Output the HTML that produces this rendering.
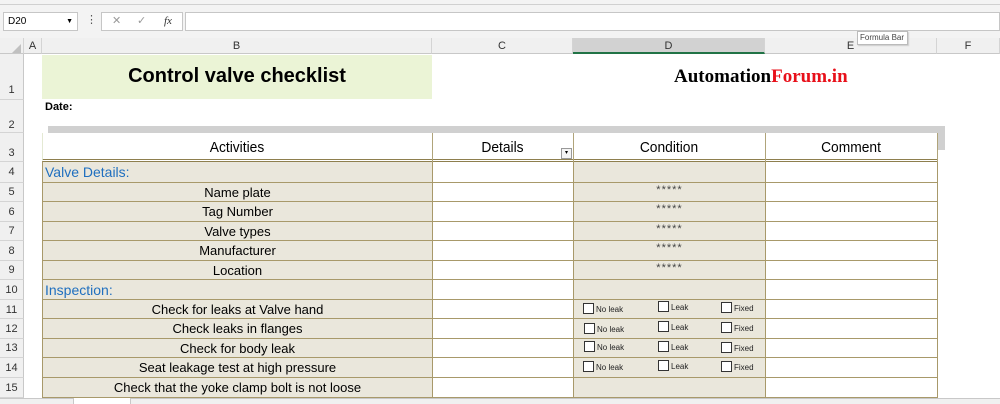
<!DOCTYPE html>
<html><head><meta charset="utf-8"><style>
*{margin:0;padding:0;box-sizing:border-box}
body{width:1000px;height:404px;overflow:hidden;background:#fff;font-family:"Liberation Sans",Arial,sans-serif;position:relative}
.a{position:absolute}
.rn{position:absolute;left:0;width:24px;background:#f0f0f0;border-bottom:1px solid #d4d4d4;border-right:1px solid #c8c8c8;font-size:11px;color:#333;text-align:center}
.ch{position:absolute;top:38px;height:16px;background:#f0f0f0;border-right:1px solid #d4d4d4;border-bottom:1px solid #c8c8c8;font-size:11px;color:#333;text-align:center;line-height:16px}
.cell{position:absolute;border-bottom:1px solid #a8996a;border-right:1px solid #a8996a;font-size:13px;color:#000;text-align:center;overflow:hidden;white-space:nowrap}
.bg{background:#eae7dc}
.st{font-size:11px;line-height:15px;color:#444;letter-spacing:1px}
.cb{position:absolute;font-size:8px;color:#222}
.cb i{display:inline-block;width:11px;height:11px;border:1px solid #333;vertical-align:-2px;margin-right:2px;background:#fff}
.hd{position:absolute;top:139px;text-align:center;font-size:15px;font-weight:bold;transform:scaleX(0.92)}
</style></head><body>
<div class="a" style="left:0;top:0;width:1000px;height:5px;background:#f3f3f3;border-bottom:1px solid #d0d0d0"></div>
<div class="a" style="left:0;top:5px;width:1000px;height:33px;background:#f3f3f3"></div>
<div class="a" style="left:3px;top:12px;width:75px;height:19px;background:#fff;border:1px solid #c6c6c6;font-size:10px;line-height:17px;padding-left:4px">D20<span style="position:absolute;right:4px;top:0;font-size:7px">▼</span></div>
<div class="a" style="left:86px;top:13px;font-size:11px;color:#555">⋮</div>
<div class="a" style="left:101px;top:12px;width:82px;height:19px;background:#fff;border:1px solid #c6c6c6;font-size:11px;color:#999;line-height:17px"><span style="position:absolute;left:10px">✕</span><span style="position:absolute;left:35px">✓</span><span style="position:absolute;left:62px;color:#333;font-style:italic;font-family:'Liberation Serif',serif">fx</span></div>
<div class="a" style="left:185px;top:12px;width:815px;height:19px;background:#fff;border:1px solid #c6c6c6"></div>
<div class="ch" style="left:0;width:24px"></div>
<div class="a" style="left:12px;top:44px;width:0;height:0;border-left:9px solid transparent;border-bottom:9px solid #c0c0c0"></div>
<div class="ch" style="left:24px;width:18px">A</div>
<div class="ch" style="left:42px;width:390px">B</div>
<div class="ch" style="left:432px;width:141px">C</div>
<div class="ch" style="left:573px;width:192px;background:#d2d2d2;border-bottom:2px solid #217346">D</div>
<div class="ch" style="left:765px;width:172px">E</div>
<div class="ch" style="left:937px;width:63px">F</div>
<div class="a" style="left:857px;top:31px;width:51px;height:14px;background:#fff;border:1px solid #bbb;font-size:8px;line-height:12px;padding-left:2px;color:#444;box-shadow:1px 1px 1px #ccc">Formula Bar</div>
<div class="rn" style="top:54px;height:46px;line-height:72px">1</div>
<div class="rn" style="top:100px;height:33px;line-height:50px">2</div>
<div class="rn" style="top:133px;height:29px;line-height:40px">3</div>
<div class="rn" style="top:162px;height:21px;line-height:21px">4</div>
<div class="rn" style="top:183px;height:19px;line-height:19px">5</div>
<div class="rn" style="top:202px;height:20px;line-height:20px">6</div>
<div class="rn" style="top:222px;height:19px;line-height:19px">7</div>
<div class="rn" style="top:241px;height:20px;line-height:20px">8</div>
<div class="rn" style="top:261px;height:19px;line-height:19px">9</div>
<div class="rn" style="top:280px;height:20px;line-height:20px">10</div>
<div class="rn" style="top:300px;height:19px;line-height:20px">11</div>
<div class="rn" style="top:319px;height:20px;line-height:20px">12</div>
<div class="rn" style="top:339px;height:19px;line-height:19px">13</div>
<div class="rn" style="top:358px;height:20px;line-height:20px">14</div>
<div class="rn" style="top:378px;height:20px;line-height:20px">15</div>
<div class="a" style="left:42px;top:55px;width:390px;height:44px;background:#ebf4d6;font-size:20px;font-weight:bold;text-align:center;line-height:42px">Control valve checklist</div>
<div class="a" style="left:674px;top:66px;font-family:'Liberation Serif',serif;font-weight:bold;font-size:19px">Automation<span style="color:#e8101a">Forum.in</span></div>
<div class="a" style="left:45px;top:101px;font-size:11px;font-weight:bold">Date:</div>
<div class="a" style="left:48px;top:126px;width:897px;height:7px;background:#d0d0d0"></div>
<div class="a" style="left:937px;top:126px;width:8px;height:24px;background:#d0d0d0"></div>
<div class="a" style="left:42px;top:133px;width:896px;height:29px;background:#fff;border-left:1px solid #e4e9d3;border-bottom:3px double #8e7f4e"></div>
<div class="a" style="left:432px;top:133px;width:1px;height:29px;background:#b0a47a"></div>
<div class="a" style="left:573px;top:133px;width:1px;height:29px;background:#b0a47a"></div>
<div class="a" style="left:765px;top:133px;width:1px;height:29px;background:#b0a47a"></div>
<div class="a" style="left:937px;top:133px;width:1px;height:29px;background:#b0a47a"></div>
<div class="hd" style="left:42px;width:390px;font-weight:normal">Activities</div>
<div class="hd" style="left:432px;width:141px;font-weight:normal">Details</div>
<div class="hd" style="left:573px;width:192px;font-weight:normal">Condition</div>
<div class="hd" style="left:765px;width:172px;font-weight:normal">Comment</div>
<div class="a" style="left:561px;top:148px;width:11px;height:11px;border:1px solid #999;background:#f4f4f4;font-size:6px;text-align:center;line-height:9px">▾</div>
<div class="a" style="left:42px;top:162px;width:1px;height:236px;background:#a8996a"></div>

<div class="cell bg" style="left:43px;top:162px;width:390px;height:21px;text-align:left;padding-left:2px;color:#1f6fbf;font-size:14px;line-height:20px">Valve Details:</div>
<div class="cell" style="left:433px;top:162px;width:141px;height:21px"></div>
<div class="cell bg" style="left:574px;top:162px;width:192px;height:21px"></div>
<div class="cell" style="left:766px;top:162px;width:172px;height:21px"></div>

<div class="cell bg" style="left:43px;top:183px;width:390px;height:19px;line-height:19px">Name plate</div>
<div class="cell" style="left:433px;top:183px;width:141px;height:19px"></div>
<div class="cell bg st" style="left:574px;top:183px;width:192px;height:19px">*****</div>
<div class="cell" style="left:766px;top:183px;width:172px;height:19px"></div>

<div class="cell bg" style="left:43px;top:202px;width:390px;height:20px;line-height:20px">Tag Number</div>
<div class="cell" style="left:433px;top:202px;width:141px;height:20px"></div>
<div class="cell bg st" style="left:574px;top:202px;width:192px;height:20px">*****</div>
<div class="cell" style="left:766px;top:202px;width:172px;height:20px"></div>

<div class="cell bg" style="left:43px;top:222px;width:390px;height:19px;line-height:19px">Valve types</div>
<div class="cell" style="left:433px;top:222px;width:141px;height:19px"></div>
<div class="cell bg st" style="left:574px;top:222px;width:192px;height:19px">*****</div>
<div class="cell" style="left:766px;top:222px;width:172px;height:19px"></div>

<div class="cell bg" style="left:43px;top:241px;width:390px;height:20px;line-height:20px">Manufacturer</div>
<div class="cell" style="left:433px;top:241px;width:141px;height:20px"></div>
<div class="cell bg st" style="left:574px;top:241px;width:192px;height:20px">*****</div>
<div class="cell" style="left:766px;top:241px;width:172px;height:20px"></div>

<div class="cell bg" style="left:43px;top:261px;width:390px;height:19px;line-height:19px">Location</div>
<div class="cell" style="left:433px;top:261px;width:141px;height:19px"></div>
<div class="cell bg st" style="left:574px;top:261px;width:192px;height:19px">*****</div>
<div class="cell" style="left:766px;top:261px;width:172px;height:19px"></div>

<div class="cell bg" style="left:43px;top:280px;width:390px;height:20px;text-align:left;padding-left:2px;color:#1f6fbf;font-size:14px;line-height:20px">Inspection:</div>
<div class="cell" style="left:433px;top:280px;width:141px;height:20px"></div>
<div class="cell bg" style="left:574px;top:280px;width:192px;height:20px"></div>
<div class="cell" style="left:766px;top:280px;width:172px;height:20px"></div>

<div class="cell bg" style="left:43px;top:300px;width:390px;height:19px;line-height:19px">Check for leaks at Valve hand</div>
<div class="cell" style="left:433px;top:300px;width:141px;height:19px"></div>
<div class="cell bg" style="left:574px;top:300px;width:192px;height:19px"></div>
<div class="cell" style="left:766px;top:300px;width:172px;height:19px"></div>

<div class="cell bg" style="left:43px;top:319px;width:390px;height:20px;line-height:20px">Check leaks in flanges</div>
<div class="cell" style="left:433px;top:319px;width:141px;height:20px"></div>
<div class="cell bg" style="left:574px;top:319px;width:192px;height:20px"></div>
<div class="cell" style="left:766px;top:319px;width:172px;height:20px"></div>

<div class="cell bg" style="left:43px;top:339px;width:390px;height:19px;line-height:19px">Check for body leak</div>
<div class="cell" style="left:433px;top:339px;width:141px;height:19px"></div>
<div class="cell bg" style="left:574px;top:339px;width:192px;height:19px"></div>
<div class="cell" style="left:766px;top:339px;width:172px;height:19px"></div>

<div class="cell bg" style="left:43px;top:358px;width:390px;height:20px;line-height:20px">Seat leakage test at high pressure</div>
<div class="cell" style="left:433px;top:358px;width:141px;height:20px"></div>
<div class="cell bg" style="left:574px;top:358px;width:192px;height:20px"></div>
<div class="cell" style="left:766px;top:358px;width:172px;height:20px"></div>

<div class="cell bg" style="left:43px;top:378px;width:390px;height:20px;line-height:19px">Check that the yoke clamp bolt is not loose</div>
<div class="cell" style="left:433px;top:378px;width:141px;height:20px"></div>
<div class="cell bg" style="left:574px;top:378px;width:192px;height:20px"></div>
<div class="cell" style="left:766px;top:378px;width:172px;height:20px"></div>

<div class="cb" style="left:583px;top:303px"><i></i>No leak</div>
<div class="cb" style="left:658px;top:301px"><i></i>Leak</div>
<div class="cb" style="left:721px;top:302px"><i></i>Fixed</div>
<div class="cb" style="left:584px;top:323px"><i></i>No leak</div>
<div class="cb" style="left:658px;top:321px"><i></i>Leak</div>
<div class="cb" style="left:721px;top:322px"><i></i>Fixed</div>
<div class="cb" style="left:584px;top:341px"><i></i>No leak</div>
<div class="cb" style="left:658px;top:341px"><i></i>Leak</div>
<div class="cb" style="left:721px;top:342px"><i></i>Fixed</div>
<div class="cb" style="left:583px;top:361px"><i></i>No leak</div>
<div class="cb" style="left:658px;top:360px"><i></i>Leak</div>
<div class="cb" style="left:721px;top:361px"><i></i>Fixed</div>

<div class="a" style="left:0;top:398px;width:1000px;height:6px;background:#f0f0f0;border-top:1px solid #c8c8c8"></div>
<div class="a" style="left:73px;top:398px;width:58px;height:6px;background:#fff;border-left:1px solid #c8c8c8;border-right:1px solid #c8c8c8"></div>
</body></html>
